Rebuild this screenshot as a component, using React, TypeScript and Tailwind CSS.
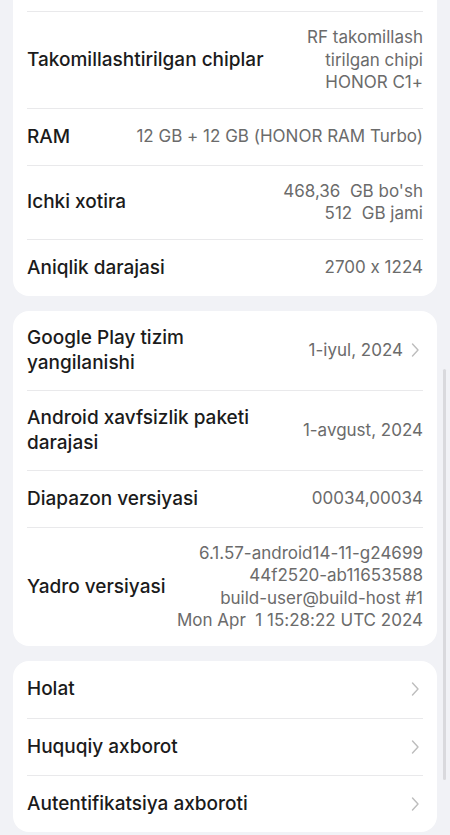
import React from "react"

type Row = {
  title: string[]
  value?: string[]
  chevron?: boolean
}

const cards: Row[][] = [
  [
    { title: ["Takomillashtirilgan chiplar"], value: ["RF takomillash", "tirilgan chipi", "HONOR C1+"] },
    { title: ["RAM"], value: ["12 GB + 12 GB (HONOR RAM Turbo)"] },
    { title: ["Ichki xotira"], value: ["468,36  GB bo'sh", "512  GB jami"] },
    { title: ["Aniqlik darajasi"], value: ["2700 x 1224"] },
  ],
  [
    { title: ["Google Play tizim", "yangilanishi"], value: ["1-iyul, 2024"], chevron: true },
    { title: ["Android xavfsizlik paketi", "darajasi"], value: ["1-avgust, 2024"] },
    { title: ["Diapazon versiyasi"], value: ["00034,00034"] },
    {
      title: ["Yadro versiyasi"],
      value: ["6.1.57-android14-11-g24699", "44f2520-ab11653588", "build-user@build-host #1", "Mon Apr  1 15:28:22 UTC 2024"],
    },
  ],
  [
    { title: ["Holat"], chevron: true },
    { title: ["Huquqiy axborot"], chevron: true },
    { title: ["Autentifikatsiya axboroti"], chevron: true },
  ],
]

function Chevron() {
  return (
    <svg width="10" height="16" viewBox="0 0 10 16" fill="none" className="mr-[3px] shrink-0">
      <path d="M2.5 2 L8 8 L2.5 14" stroke="#bdbdbd" strokeWidth="1.4" strokeLinecap="round" strokeLinejoin="round" />
    </svg>
  )
}

function InfoRow({ row, first }: { row: Row; first: boolean }) {
  return (
    <div
      className={`flex min-h-[57px] items-center justify-between gap-2 py-[14px] ${first ? "" : "border-t border-[#e9e9eb]"}`}
    >
      <div className="shrink-0 whitespace-nowrap text-[19px] leading-[25.5px] font-medium text-[#1b1b1b]">
        {row.title.map((t) => (
          <div key={t}>{t}</div>
        ))}
      </div>
      <div className="flex items-center gap-[7px]">
        {row.value && (
          <div className="text-right text-[17px] leading-[22.5px] text-[#6b6b6b] whitespace-pre">
            {row.value.map((v) => (
              <div key={v}>{v}</div>
            ))}
          </div>
        )}
        {row.chevron && <Chevron />}
      </div>
    </div>
  )
}

export default function App() {
  return (
    <div
      className="relative h-[835px] w-[450px] overflow-hidden bg-[#f1f2f6]"
      style={{ fontFamily: "Inter, 'Noto Sans', sans-serif", fontFeatureSettings: '"calt" 0' }}
    >
      <div className="flex flex-col gap-[15px] px-[13px]">
        {/* first card is scrolled, its top is off screen */}
        <div className="rounded-b-[16px] bg-white px-[14px]">
          <div className="h-[11px]" />
          {cards[0].map((r, i) => (
            <InfoRow key={i} row={r} first={false} />
          ))}
        </div>
        {cards.slice(1).map((card, ci) => (
          <div key={ci} className="rounded-[16px] bg-white px-[14px]">
            {card.map((r, i) => (
              <InfoRow key={i} row={r} first={i === 0} />
            ))}
          </div>
        ))}
      </div>
      {/* scrollbar */}
      <div className="absolute right-[4px] top-[369px] h-[411px] w-[3px] rounded-full bg-[#d9d9dd]" />
    </div>
  )
}
